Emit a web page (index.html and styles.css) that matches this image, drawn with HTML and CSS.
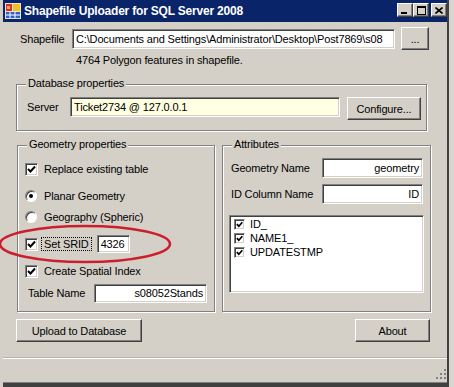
FILE: index.html
```html
<!DOCTYPE html>
<html lang="en">
<head>
  <meta charset="UTF-8">
  <title>Shapefile Uploader for SQL Server 2008</title>
  <link rel="stylesheet" href="styles.css">
</head>
<body>

<div class="window">
  <div class="titlebar">
    <svg class="app-icon" width="16" height="16" viewBox="0 0 16 16">
      <rect x="0" y="0" width="16" height="16" fill="#e8e4d8"/>
      <rect x="1" y="1" width="6" height="7" fill="#d8341c"/>
      <rect x="8" y="1" width="7" height="7" fill="#f0c020"/>
      <rect x="2" y="3" width="3" height="3" fill="#f8a070"/>
      <rect x="1" y="9" width="14" height="6" fill="#3060c8"/>
      <path d="M1 12h14M5 9v6M10 9v6" stroke="#ffffff" stroke-width="1"/>
    </svg>
    <span class="title">Shapefile Uploader for SQL Server 2008</span>
    <div class="caption-buttons">
      <span class="cap-btn"><i class="glyph-min"></i></span>
      <span class="cap-btn"><i class="glyph-max"></i></span>
      <span class="cap-btn close">
        <svg width="8" height="7" viewBox="0 0 8 7"><path d="M0.5 0.5l7 6M7.5 0.5l-7 6" stroke="#000" stroke-width="1.6"/></svg>
      </span>
    </div>
  </div>

  <div class="client">
    <div class="file-row">
      <span class="lbl lbl-file">Shapefile</span>
      <div class="field path">C:\Documents and Settings\Administrator\Desktop\Post7869\s08</div>
      <button class="btn browse">...</button>
    </div>
    <div class="info">4764 Polygon features in shapefile.</div>

    <div class="group db">
      <span class="legend">Database properties</span>
      <div class="db-row">
        <span class="lbl lbl-server">Server</span>
        <div class="field server">Ticket2734 @ 127.0.0.1</div>
        <button class="btn configure">Configure...</button>
      </div>
    </div>

    <div class="columns">
      <div class="group geom">
        <span class="legend">Geometry properties</span>
        <div class="opt">
          <span class="check"><svg width="9" height="9" viewBox="0 0 9 9"><path d="M1 4l2.5 2.5L8 1.5" stroke="#000" stroke-width="2" fill="none"/></svg></span>
          Replace existing table
        </div>
        <div class="opt">
          <span class="radio on"></span>
          Planar Geometry
        </div>
        <div class="opt near">
          <span class="radio"></span>
          Geography (Spheric)
        </div>
        <div class="opt">
          <span class="check"><svg width="9" height="9" viewBox="0 0 9 9"><path d="M1 4l2.5 2.5L8 1.5" stroke="#000" stroke-width="2" fill="none"/></svg></span>
          <span class="focus">Set SRID</span>
          <div class="field srid">4326</div>
        </div>
        <div class="opt">
          <span class="check"><svg width="9" height="9" viewBox="0 0 9 9"><path d="M1 4l2.5 2.5L8 1.5" stroke="#000" stroke-width="2" fill="none"/></svg></span>
          Create Spatial Index
        </div>
        <div class="opt closer">
          <span class="lbl lbl-table">Table Name</span>
          <div class="field table-name">s08052Stands</div>
        </div>
      </div>

      <div class="group attrs">
        <span class="legend">Attributes</span>
        <div class="attr-row">
          <span class="lbl lbl-attr">Geometry Name</span>
          <div class="field attr-field">geometry</div>
        </div>
        <div class="attr-row">
          <span class="lbl lbl-attr">ID Column Name</span>
          <div class="field attr-field">ID</div>
        </div>
        <div class="listbox">
          <div class="item"><span class="check small"><svg width="7" height="7" viewBox="0 0 7 7"><path d="M0.8 3.2l2 2L6.3 1.2" stroke="#000" stroke-width="1.7" fill="none"/></svg></span>ID_</div>
          <div class="item"><span class="check small"><svg width="7" height="7" viewBox="0 0 7 7"><path d="M0.8 3.2l2 2L6.3 1.2" stroke="#000" stroke-width="1.7" fill="none"/></svg></span>NAME1_</div>
          <div class="item"><span class="check small"><svg width="7" height="7" viewBox="0 0 7 7"><path d="M0.8 3.2l2 2L6.3 1.2" stroke="#000" stroke-width="1.7" fill="none"/></svg></span>UPDATESTMP</div>
        </div>
      </div>
    </div>

    <div class="actions">
      <button class="btn upload">Upload to Database</button>
      <button class="btn about">About</button>
    </div>
  </div>

  <div class="statusbar">
    <svg class="grip" width="12" height="12" viewBox="0 0 12 12">
      <g fill="#ffffff">
        <rect x="10" y="2" width="1" height="1"/>
        <rect x="6" y="6" width="1" height="1"/><rect x="10" y="6" width="1" height="1"/>
        <rect x="2" y="10" width="1" height="1"/><rect x="6" y="10" width="1" height="1"/><rect x="10" y="10" width="1" height="1"/>
      </g>
      <g fill="#808080">
        <rect x="9" y="1" width="2" height="2"/>
        <rect x="5" y="5" width="2" height="2"/><rect x="9" y="5" width="2" height="2"/>
        <rect x="1" y="9" width="2" height="2"/><rect x="5" y="9" width="2" height="2"/><rect x="9" y="9" width="2" height="2"/>
      </g>
    </svg>
  </div>
  <div class="frame-bottom"></div>
</div>

<!-- red marker drawn over the screenshot -->
<svg class="marker" width="176" height="44" viewBox="0 0 176 44">
  <ellipse cx="85" cy="21" rx="85" ry="18" fill="none" stroke="#cc1f2e" stroke-width="2.6"/>
</svg>

</body>
</html>
```

FILE: styles.css
```css
* {
  box-sizing: border-box;
}
body {
  margin: 0;
  background: #d8d5ce;
  font-family: "Liberation Sans", Arial, sans-serif;
  font-size: 11px;
  letter-spacing: -0.15px;
  color: #000;
  position: relative;
}
.window {
  width: 449px;
  height: 387px;
  background: #d4d0c8;
  border-left: 3px solid #d4d0c8;
  border-right: 2px solid #404040;
  display: flex;
  flex-direction: column;
}
.titlebar {
  height: 22px;
  background: #0a246a;
  color: #fff;
  display: flex;
  align-items: center;
  padding-left: 2px;
}
.app-icon {
  flex-shrink: 0;
}
.title {
  margin-left: 3px;
  font-weight: bold;
  font-size: 12px;
  letter-spacing: -0.2px;
  white-space: nowrap;
}
.caption-buttons {
  margin-left: auto;
  align-self: flex-start;
  margin-top: 3px;
  display: flex;
}
.cap-btn {
  width: 16px;
  height: 14px;
  background: #d4d0c8;
  border: 1px solid;
  border-color: #fff #404040 #404040 #fff;
  box-shadow: inset -1px -1px #808080;
  display: flex;
  align-items: center;
  justify-content: center;
  position: relative;
}
.cap-btn.close {
  margin-left: 2px;
}
.glyph-min {
  position: absolute;
  left: 3px;
  top: 8px;
  width: 6px;
  height: 2px;
  background: #000;
}
.glyph-max {
  width: 9px;
  height: 9px;
  border: 1px solid #000;
  border-top-width: 2px;
}

.client {
  flex: 1;
  padding: 5px 0 0 13px;
  display: flex;
  flex-direction: column;
}
.lbl {
  white-space: nowrap;
  flex-shrink: 0;
}
.field {
  height: 20px;
  background: #fff;
  border: 1px solid;
  border-color: #808080 #fff #fff #808080;
  box-shadow: inset 1px 1px #404040, inset -1px -1px #d4d0c8;
  padding: 0 3px;
  line-height: 18px;
  white-space: nowrap;
  overflow: hidden;
  flex-shrink: 0;
}
.btn {
  font: inherit;
  letter-spacing: inherit;
  color: #000;
  height: 23px;
  padding: 0;
  background: #d4d0c8;
  border: 1px solid;
  border-color: #fff #404040 #404040 #fff;
  box-shadow: inset -1px -1px #808080;
  flex-shrink: 0;
}

.file-row {
  display: flex;
  align-items: center;
  height: 23px;
}
.lbl-file {
  margin-left: 4px;
  width: 52px;
}
.path {
  width: 323px;
}
.browse {
  width: 28px;
  margin-left: 6px;
}
.info {
  margin: 3px 0 0 60px;
  line-height: 14px;
}

.group {
  position: relative;
  border: 1px solid #808080;
  box-shadow: inset 1px 1px #fff, 1px 1px #fff;
}
.legend {
  position: absolute;
  top: -8px;
  left: 9px;
  padding: 0 2px;
  background: #d4d0c8;
  line-height: 13px;
  white-space: nowrap;
}
.db {
  margin-top: 17px;
  width: 411px;
  padding: 12px 0 10px 10px;
}
.db-row {
  display: flex;
  align-items: flex-start;
}
.lbl-server {
  width: 43px;
  line-height: 20px;
}
.server {
  width: 270px;
  background: #ffffe1;
}
.configure {
  width: 74px;
  margin-left: 7px;
}

.columns {
  display: flex;
  margin-top: 14px;
}
.geom {
  margin-left: 1px;
  width: 198px;
  height: 167px;
  padding: 13px 0 0 7px;
}
.attrs {
  margin-left: 7px;
  width: 209px;
  height: 167px;
  padding: 12px 0 0 8px;
}
.opt {
  display: flex;
  align-items: center;
  height: 20px;
  white-space: nowrap;
}
.opt + .opt {
  margin-top: 7px;
}
.opt.near {
  margin-top: 1px;
}
.opt.closer {
  margin-top: 2px;
}
.check {
  width: 13px;
  height: 13px;
  margin-right: 6px;
  background: #fff;
  border: 1px solid;
  border-color: #808080 #fff #fff #808080;
  box-shadow: inset 1px 1px #404040, inset -1px -1px #d4d0c8;
  display: flex;
  align-items: center;
  justify-content: center;
  flex-shrink: 0;
}
.check.small {
  width: 11px;
  height: 11px;
  margin-right: 5px;
}
.radio {
  width: 12px;
  height: 12px;
  margin-right: 7px;
  border-radius: 50%;
  background: #fff;
  border: 1px solid;
  border-color: #808080 #fff #fff #808080;
  box-shadow: inset 1px 1px #404040;
  display: flex;
  align-items: center;
  justify-content: center;
  flex-shrink: 0;
}
.radio.on::after {
  content: "";
  width: 4px;
  height: 4px;
  border-radius: 50%;
  background: #000;
}
.focus {
  margin-left: -3px;
  border: 1px dotted #000;
  padding: 0 2px;
  line-height: 12px;
}
.srid {
  width: 33px;
  height: 18px;
  line-height: 16px;
  margin-left: 5px;
}
.lbl-table {
  margin-left: 3px;
  width: 66px;
}
.table-name {
  width: 113px;
  height: 19px;
  line-height: 17px;
  text-align: right;
}

.attr-row {
  display: flex;
  align-items: center;
  height: 20px;
}
.attr-row + .attr-row {
  margin-top: 6px;
}
.lbl-attr {
  width: 91px;
}
.attr-field {
  width: 101px;
  text-align: right;
}
.listbox {
  margin: 11px 0 0 -2px;
  width: 195px;
  height: 78px;
  background: #fff;
  border: 1px solid;
  border-color: #808080 #fff #fff #808080;
  box-shadow: inset 1px 1px #404040, inset -1px -1px #d4d0c8;
  padding: 1px 0 0 4px;
}
.item {
  display: flex;
  align-items: center;
  height: 14px;
  white-space: nowrap;
}

.actions {
  display: flex;
  justify-content: space-between;
  width: 414px;
  margin-top: 7px;
}
.upload {
  width: 126px;
}
.about {
  width: 75px;
}

.statusbar {
  height: 24px;
  border-top: 1px solid #fff;
  box-shadow: 0 -1px #b8b4ac;
  display: flex;
  justify-content: flex-end;
  align-items: flex-end;
  padding: 0 0 2px 0;
}
.frame-bottom {
  height: 5px;
  background: #404040;
  border-top: 1px solid #808080;
}

.marker {
  position: absolute;
  left: 0;
  top: 223px;
}
```
